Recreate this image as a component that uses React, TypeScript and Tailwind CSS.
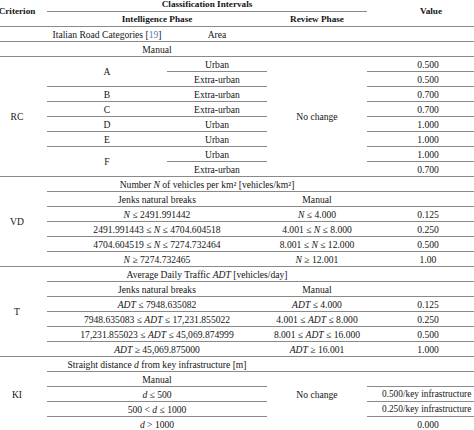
import React from "react";

const T = "flex items-center justify-center whitespace-nowrap leading-none";
const H = "flex items-center justify-center whitespace-nowrap leading-none font-bold text-[9.2px]";
const LN = "self-end h-px bg-[#8a8a8a]";

function I({ children }: { children: React.ReactNode }) {
  return <span className="italic">{children}</span>;
}

export default function App() {
  return (
    <div className="w-[474px] h-[430px] overflow-hidden bg-white text-[#151515] text-[9.6px] [font-family:'Liberation_Serif','Times_New_Roman',serif]">
      <div className="-mt-[3px] -ml-[13px] w-[502px] grid grid-cols-[60px_120px_100px_100px_122px] auto-rows-[15px]">
        {/* Header */}
        <div className={`${H} row-start-1 row-span-2 col-start-1 col-span-1`}>Criterion</div>
        <div className={`${H} row-start-1 row-span-1 col-start-2 col-span-3`}>Classification Intervals</div>
        <div className={`${H} row-start-1 row-span-2 col-start-5 col-span-1 pl-[6px]`}>Value</div>
        <div className={`${H} row-start-2 row-span-1 col-start-2 col-span-2`}>Intelligence Phase</div>
        <div className={`${H} row-start-2 row-span-1 col-start-4 col-span-1`}>Review Phase</div>
        <div className={`${LN} row-start-1 row-span-1 col-start-2 col-span-3`} />
        <div className={`${LN} row-start-2 row-span-1 col-start-1 col-span-5`} />

        {/* Italian Road Categories */}
        <div className={`${T} row-start-3 row-span-1 col-start-2 col-span-1`}>
          Italian Road Categories [<span className="text-[#4f7bc4]">19</span>]
        </div>
        <div className={`${T} row-start-3 row-span-1 col-start-3 col-span-1`}>Area</div>
        <div className={`${LN} row-start-3 row-span-1 col-start-1 col-span-5`} />
        <div className={`${T} row-start-4 row-span-1 col-start-2 col-span-2`}>Manual</div>
        <div className={`${LN} row-start-4 row-span-1 col-start-1 col-span-5`} />

        {/* RC */}
        <div className={`${T} row-start-5 row-span-8 col-start-1 col-span-1`}>RC</div>
        <div className={`${T} row-start-5 row-span-2 col-start-2 col-span-1`}>A</div>
        <div className={`${T} row-start-7 row-span-1 col-start-2 col-span-1`}>B</div>
        <div className={`${T} row-start-8 row-span-1 col-start-2 col-span-1`}>C</div>
        <div className={`${T} row-start-9 row-span-1 col-start-2 col-span-1`}>D</div>
        <div className={`${T} row-start-10 row-span-1 col-start-2 col-span-1`}>E</div>
        <div className={`${T} row-start-11 row-span-2 col-start-2 col-span-1`}>F</div>
        <div className={`${T} row-start-5 row-span-1 col-start-3 col-span-1`}>Urban</div>
        <div className={`${T} row-start-6 row-span-1 col-start-3 col-span-1`}>Extra-urban</div>
        <div className={`${T} row-start-7 row-span-1 col-start-3 col-span-1`}>Extra-urban</div>
        <div className={`${T} row-start-8 row-span-1 col-start-3 col-span-1`}>Extra-urban</div>
        <div className={`${T} row-start-9 row-span-1 col-start-3 col-span-1`}>Urban</div>
        <div className={`${T} row-start-10 row-span-1 col-start-3 col-span-1`}>Urban</div>
        <div className={`${T} row-start-11 row-span-1 col-start-3 col-span-1`}>Urban</div>
        <div className={`${T} row-start-12 row-span-1 col-start-3 col-span-1`}>Extra-urban</div>
        <div className={`${T} row-start-5 row-span-8 col-start-4 col-span-1`}>No change</div>
        <div className={`${T} row-start-5 row-span-1 col-start-5 col-span-1`}>0.500</div>
        <div className={`${T} row-start-6 row-span-1 col-start-5 col-span-1`}>0.500</div>
        <div className={`${T} row-start-7 row-span-1 col-start-5 col-span-1`}>0.700</div>
        <div className={`${T} row-start-8 row-span-1 col-start-5 col-span-1`}>0.700</div>
        <div className={`${T} row-start-9 row-span-1 col-start-5 col-span-1`}>1.000</div>
        <div className={`${T} row-start-10 row-span-1 col-start-5 col-span-1`}>1.000</div>
        <div className={`${T} row-start-11 row-span-1 col-start-5 col-span-1`}>1.000</div>
        <div className={`${T} row-start-12 row-span-1 col-start-5 col-span-1`}>0.700</div>
        <div className={`${LN} row-start-5 row-span-1 col-start-3 col-span-1`} />
        <div className={`${LN} row-start-5 row-span-1 col-start-5 col-span-1`} />
        <div className={`${LN} row-start-6 row-span-1 col-start-2 col-span-2`} />
        <div className={`${LN} row-start-6 row-span-1 col-start-5 col-span-1`} />
        <div className={`${LN} row-start-7 row-span-1 col-start-2 col-span-2`} />
        <div className={`${LN} row-start-7 row-span-1 col-start-5 col-span-1`} />
        <div className={`${LN} row-start-8 row-span-1 col-start-2 col-span-2`} />
        <div className={`${LN} row-start-8 row-span-1 col-start-5 col-span-1`} />
        <div className={`${LN} row-start-9 row-span-1 col-start-2 col-span-2`} />
        <div className={`${LN} row-start-9 row-span-1 col-start-5 col-span-1`} />
        <div className={`${LN} row-start-10 row-span-1 col-start-2 col-span-2`} />
        <div className={`${LN} row-start-10 row-span-1 col-start-5 col-span-1`} />
        <div className={`${LN} row-start-11 row-span-1 col-start-3 col-span-1`} />
        <div className={`${LN} row-start-11 row-span-1 col-start-5 col-span-1`} />
        <div className={`${LN} row-start-12 row-span-1 col-start-1 col-span-5`} />

        {/* VD */}
        <div className={`${T} row-start-13 row-span-6 col-start-1 col-span-1`}>VD</div>
        <div className={`${T} row-start-13 row-span-1 col-start-2 col-span-3`}>
          Number&nbsp;<I>N</I>&nbsp;of vehicles per km² [vehicles/km²]
        </div>
        <div className={`${T} row-start-14 row-span-1 col-start-2 col-span-2`}>Jenks natural breaks</div>
        <div className={`${T} row-start-14 row-span-1 col-start-4 col-span-1`}>Manual</div>
        <div className={`${T} row-start-15 row-span-1 col-start-2 col-span-2`}><I>N</I>&nbsp;≤ 2491.991442</div>
        <div className={`${T} row-start-16 row-span-1 col-start-2 col-span-2`}>2491.991443 ≤&nbsp;<I>N</I>&nbsp;≤ 4704.604518</div>
        <div className={`${T} row-start-17 row-span-1 col-start-2 col-span-2`}>4704.604519 ≤&nbsp;<I>N</I>&nbsp;≤ 7274.732464</div>
        <div className={`${T} row-start-18 row-span-1 col-start-2 col-span-2`}><I>N</I>&nbsp;≥ 7274.732465</div>
        <div className={`${T} row-start-15 row-span-1 col-start-4 col-span-1`}><I>N</I>&nbsp;≤ 4.000</div>
        <div className={`${T} row-start-16 row-span-1 col-start-4 col-span-1`}>4.001 ≤&nbsp;<I>N</I>&nbsp;≤ 8.000</div>
        <div className={`${T} row-start-17 row-span-1 col-start-4 col-span-1`}>8.001 ≤&nbsp;<I>N</I>&nbsp;≤ 12.000</div>
        <div className={`${T} row-start-18 row-span-1 col-start-4 col-span-1`}><I>N</I>&nbsp;≥ 12.001</div>
        <div className={`${T} row-start-15 row-span-1 col-start-5 col-span-1`}>0.125</div>
        <div className={`${T} row-start-16 row-span-1 col-start-5 col-span-1`}>0.250</div>
        <div className={`${T} row-start-17 row-span-1 col-start-5 col-span-1`}>0.500</div>
        <div className={`${T} row-start-18 row-span-1 col-start-5 col-span-1`}>1.00</div>
        <div className={`${LN} row-start-13 row-span-1 col-start-2 col-span-4`} />
        <div className={`${LN} row-start-14 row-span-1 col-start-2 col-span-4`} />
        <div className={`${LN} row-start-15 row-span-1 col-start-2 col-span-4`} />
        <div className={`${LN} row-start-16 row-span-1 col-start-2 col-span-4`} />
        <div className={`${LN} row-start-17 row-span-1 col-start-2 col-span-4`} />
        <div className={`${LN} row-start-18 row-span-1 col-start-1 col-span-5`} />

        {/* T */}
        <div className={`${T} row-start-19 row-span-6 col-start-1 col-span-1`}>T</div>
        <div className={`${T} row-start-19 row-span-1 col-start-2 col-span-3`}>
          Average Daily Traffic&nbsp;<I>ADT</I>&nbsp;[vehicles/day]
        </div>
        <div className={`${T} row-start-20 row-span-1 col-start-2 col-span-2`}>Jenks natural breaks</div>
        <div className={`${T} row-start-20 row-span-1 col-start-4 col-span-1`}>Manual</div>
        <div className={`${T} row-start-21 row-span-1 col-start-2 col-span-2`}><I>ADT</I>&nbsp;≤ 7948.635082</div>
        <div className={`${T} row-start-22 row-span-1 col-start-2 col-span-2`}>7948.635083 ≤&nbsp;<I>ADT</I>&nbsp;≤ 17,231.855022</div>
        <div className={`${T} row-start-23 row-span-1 col-start-2 col-span-2`}>17,231.855023 ≤&nbsp;<I>ADT</I>&nbsp;≤ 45,069.874999</div>
        <div className={`${T} row-start-24 row-span-1 col-start-2 col-span-2`}><I>ADT</I>&nbsp;≥ 45,069.875000</div>
        <div className={`${T} row-start-21 row-span-1 col-start-4 col-span-1`}><I>ADT</I>&nbsp;≤ 4.000</div>
        <div className={`${T} row-start-22 row-span-1 col-start-4 col-span-1`}>4.001 ≤&nbsp;<I>ADT</I>&nbsp;≤ 8.000</div>
        <div className={`${T} row-start-23 row-span-1 col-start-4 col-span-1`}>8.001 ≤&nbsp;<I>ADT</I>&nbsp;≤ 16.000</div>
        <div className={`${T} row-start-24 row-span-1 col-start-4 col-span-1`}><I>ADT</I>&nbsp;≥ 16.001</div>
        <div className={`${T} row-start-21 row-span-1 col-start-5 col-span-1`}>0.125</div>
        <div className={`${T} row-start-22 row-span-1 col-start-5 col-span-1`}>0.250</div>
        <div className={`${T} row-start-23 row-span-1 col-start-5 col-span-1`}>0.500</div>
        <div className={`${T} row-start-24 row-span-1 col-start-5 col-span-1`}>1.000</div>
        <div className={`${LN} row-start-19 row-span-1 col-start-2 col-span-4`} />
        <div className={`${LN} row-start-20 row-span-1 col-start-2 col-span-4`} />
        <div className={`${LN} row-start-21 row-span-1 col-start-2 col-span-4`} />
        <div className={`${LN} row-start-22 row-span-1 col-start-2 col-span-4`} />
        <div className={`${LN} row-start-23 row-span-1 col-start-2 col-span-4`} />
        <div className={`${LN} row-start-24 row-span-1 col-start-1 col-span-5`} />

        {/* KI */}
        <div className={`${T} row-start-25 row-span-5 col-start-1 col-span-1`}>KI</div>
        <div className={`${T} row-start-25 row-span-1 col-start-2 col-span-2`}>
          Straight distance&nbsp;<I>d</I>&nbsp;from key infrastructure [m]
        </div>
        <div className={`${T} row-start-26 row-span-1 col-start-2 col-span-2`}>Manual</div>
        <div className={`${T} row-start-27 row-span-1 col-start-2 col-span-2`}><I>d</I>&nbsp;≤ 500</div>
        <div className={`${T} row-start-28 row-span-1 col-start-2 col-span-2`}>500 &lt;&nbsp;<I>d</I>&nbsp;≤ 1000</div>
        <div className={`${T} row-start-29 row-span-1 col-start-2 col-span-2`}><I>d</I>&nbsp;&gt; 1000</div>
        <div className={`${T} row-start-25 row-span-5 col-start-4 col-span-1`}>No change</div>
        <div className={`${T} row-start-27 row-span-1 col-start-5 col-span-1 justify-start pl-[15px] text-[9.3px]`}>0.500/key infrastructure</div>
        <div className={`${T} row-start-28 row-span-1 col-start-5 col-span-1 justify-start pl-[15px] text-[9.3px]`}>0.250/key infrastructure</div>
        <div className={`${T} row-start-29 row-span-1 col-start-5 col-span-1`}>0.000</div>
        <div className={`${LN} row-start-25 row-span-1 col-start-2 col-span-4`} />
        <div className={`${LN} row-start-26 row-span-1 col-start-2 col-span-2`} />
        <div className={`${LN} row-start-26 row-span-1 col-start-5 col-span-1`} />
        <div className={`${LN} row-start-27 row-span-1 col-start-2 col-span-2`} />
        <div className={`${LN} row-start-27 row-span-1 col-start-5 col-span-1`} />
        <div className={`${LN} row-start-28 row-span-1 col-start-2 col-span-2`} />
        <div className={`${LN} row-start-28 row-span-1 col-start-5 col-span-1`} />
        <div className={`${LN} row-start-29 row-span-1 col-start-1 col-span-5`} />
      </div>
    </div>
  );
}
